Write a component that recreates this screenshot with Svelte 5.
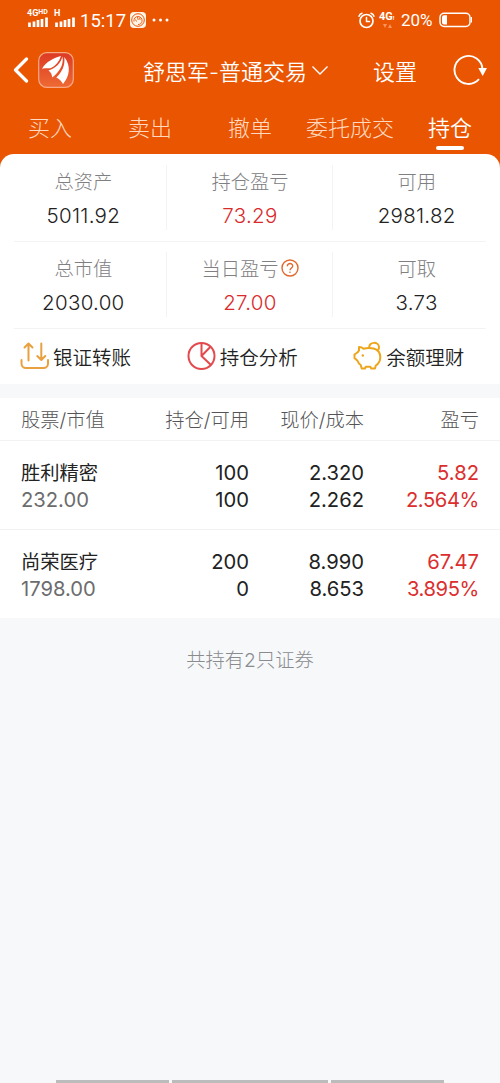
<script>
    let tabs = ["买入", "卖出", "撤单", "委托成交", "持仓"];
    let active = "持仓";

    let stats = [
        { label: "总资产", value: "5011.92" },
        { label: "持仓盈亏", value: "73.29", red: true },
        { label: "可用", value: "2981.82" },
        { label: "总市值", value: "2030.00" },
        { label: "当日盈亏", value: "27.00", red: true, help: true },
        { label: "可取", value: "3.73" },
    ];

    let stocks = [
        { name: "胜利精密", worth: "232.00", held: "100", usable: "100", price: "2.320", cost: "2.262", gain: "5.82", rate: "2.564%" },
        { name: "尚荣医疗", worth: "1798.00", held: "200", usable: "0", price: "8.990", cost: "8.653", gain: "67.47", rate: "3.895%" },
    ];
</script>

<div class="page">
    <header>
        <div class="status">
            <div class="sim">
                <span>4G<sup>HD</sup></span>
                <svg width="21" height="11" viewBox="0 0 21 11"><path d="M2.500 6.500V11M7 5.500V11M11 4v7M15 3v8M19.500 1.500v9.500" stroke="#fff" stroke-width="2.700" /></svg>
            </div>
            <div class="sim second">
                <span>H</span>
                <svg width="21" height="11" viewBox="0 0 21 11"><path d="M2.500 6.500V11M7 5.500V11M11 4v7M15 3v8M19.500 1.500v9.500" stroke="#fff" stroke-width="2.700" /></svg>
            </div>
            <span class="time">15:17</span>
            <svg class="app" width="16" height="16" viewBox="0 0 16 16">
                <rect width="16" height="16" rx="4" fill="#fff4e8" />
                <circle cx="8" cy="8" r="6.300" fill="none" stroke="#eb5500" stroke-width="1" />
                <path d="M4 9.500c-.5-3 1.500-5 4-5s4.500 2 4 5c-.4 2-2 3-4 3M5.500 7.500l1 2M7.500 5l.7 3M9.500 5.500l.6 2.500" fill="none" stroke="#eb5500" stroke-width=".9" />
            </svg>
            <svg class="dots" width="17" height="4" viewBox="0 0 17 4"><circle cx="2" cy="2" r="1.500" fill="#fff" /><circle cx="8.500" cy="2" r="1.500" fill="#fff" /><circle cx="15" cy="2" r="1.500" fill="#fff" /></svg>
            <svg class="alarm" width="17" height="17" viewBox="0 0 17 17" fill="none" stroke="#fff" stroke-linecap="round">
                <circle cx="8.500" cy="9" r="6.500" stroke-width="1.700" />
                <path d="M8.500 5.500v4h3" stroke-width="1.500" />
                <path d="M1 4.200Q1.700 2 4 1.300M16 4.200Q15.300 2 13 1.300" stroke-width="1.500" />
            </svg>
            <div class="net">
                <span>4G<i>!</i></span>
                <svg width="9" height="4" viewBox="0 0 9 4"><path d="M0 0h4L2 4zM5 4h4L7 0z" fill="#f7935c" /></svg>
            </div>
            <span class="percent">20%</span>
            <svg class="battery" width="34" height="16" viewBox="0 0 34 16">
                <rect x="1" y="1.300" width="30" height="13.200" rx="4.200" fill="none" stroke="#fff" stroke-width="1.500" />
                <path d="M5 3.300h3v9.200H5a2 2 0 0 1-2-2V5.300a2 2 0 0 1 2-2zM32 5h1v5.500h-1z" fill="#fff" />
            </svg>
        </div>

        <nav>
            <svg class="back" width="16" height="26" viewBox="0 0 16 26"><path d="M13.500 2L2.500 13l11 11" fill="none" stroke="#fff" stroke-width="3.200" stroke-linecap="round" stroke-linejoin="round" /></svg>
            <svg class="logo" width="36" height="36" viewBox="0 0 36 36">
                <defs>
                    <linearGradient id="logo-bg" x1="0" y1="0" x2="0" y2="1">
                        <stop offset="0" stop-color="#dc3a23" />
                        <stop offset="1" stop-color="#ee6a34" />
                    </linearGradient>
                </defs>
                <rect x=".7" y=".7" width="34.600" height="34.600" rx="8" fill="url(#logo-bg)" stroke="#f9a886" stroke-width="1.200" />
                <path d="M23 4C16 6 8 9.500 4 16.800c3.500-.8 6-.4 8.500-.5C17.500 14 21 10 23 4z" fill="#fff" />
                <path d="M24.500 4.500C22.500 11.500 18 16 10.500 18.500c2.500 1.700 3.500 4 3.700 7C21 20 26 13.500 24.500 4.500z" fill="#fff" />
                <path d="M26.300 5c1 8.500-2.300 15-8 20.500 3.200 1.500 5.200 3.500 6.700 6.500C31.500 24.500 33.500 14 26.300 5z" fill="#fff" />
            </svg>
            <div class="account">
                <span>舒思军-普通交易</span>
                <svg width="18" height="11" viewBox="0 0 18 11"><path d="M1.500 1.500l7.500 7.500 7.500-7.500" fill="none" stroke="#fff" stroke-width="1.400" /></svg>
            </div>
            <span class="setting">设置</span>
            <svg class="refresh" width="35" height="32" viewBox="0 0 35 32">
                <path d="M29.500 15.500A14 14 0 1 0 26 25.200" fill="none" stroke="#fff" stroke-width="1.900" />
                <path d="M25.300 14h8.700l-4.300 8z" fill="#fff" />
            </svg>
        </nav>

        <div class="tabs">
            {#each tabs as tab}
                <div class="tab" class:active={tab === active}>{tab}</div>
            {/each}
        </div>
    </header>

    <section class="assets">
        <div class="stats">
            {#each stats as stat}
                <div class="stat">
                    <div class="label">
                        {stat.label}
                        {#if stat.help}
                            <svg width="18" height="18" viewBox="0 0 18 18" fill="none" stroke="#e0692c">
                                <circle cx="9" cy="9" r="8" stroke-width="1.400" />
                                <path d="M6.300 7.200c0-3.600 5.500-3.400 5.400-.2 0 1.900-2.700 2-2.700 4.300" stroke-width="1.400" />
                                <circle cx="9" cy="13.200" r=".4" stroke-width=".9" />
                            </svg>
                        {/if}
                    </div>
                    <div class="value" class:red={stat.red}>{stat.value}</div>
                </div>
            {/each}
        </div>
        <div class="actions">
            <div class="action">
                <svg width="30" height="30" viewBox="0 0 30 30" fill="none" stroke="#e9a140" stroke-width="2" stroke-linecap="round" stroke-linejoin="round">
                    <path d="M1.500 19v3.500a4.500 4.500 0 0 0 4.500 4.500h17.500a4.500 4.500 0 0 0 4.500-4.500V19" />
                    <path d="M8.500 19.500V2.500M4.500 6.500l4-4 4 4M21.300 2.500V19M17.300 15l4 4 4-4" />
                </svg>
                <span>银证转账</span>
            </div>
            <div class="action">
                <svg width="30" height="30" viewBox="0 0 30 30" fill="none" stroke="#e24a4e" stroke-width="2" stroke-linejoin="round">
                    <circle cx="14.500" cy="15" r="13" />
                    <path d="M14.500 2v13l9.500 9M14.500 15L23.500 5.700" />
                </svg>
                <span>持仓分析</span>
            </div>
            <div class="action">
                <svg width="30" height="30" viewBox="0 0 30 30" fill="none" stroke="#eda51c" stroke-width="2" stroke-linejoin="round" stroke-linecap="round">
                    <path d="M6 6c2 0 3.300.5 4.500 1.800C13 7 17.500 6.800 20.500 7.500c4.500 1.200 6.800 4.500 6.800 8.700 0 3.600-1.500 6.300-4.500 8.300l-.8 3h-3.700l-1-1.800h-4.500l-.8 1.800H8.700l-1-3.500C6 22.800 5 21.300 4.500 19.800L1.500 17v-3.500l3.200-2.200c.4-.9.800-1.300 1.300-1.800z" />
                    <path d="M16.200 6.500c-.2-6 9.300-6.200 9.800-.4.100 1.300-.3 2.200-1 3" />
                    <circle cx="9.800" cy="14.400" r=".6" stroke-width="1.300" />
                </svg>
                <span>余额理财</span>
            </div>
        </div>
    </section>

    <section class="holdings">
        <div class="row head">
            <div>股票/市值</div>
            <div>持仓/可用</div>
            <div>现价/成本</div>
            <div>盈亏</div>
        </div>
        {#each stocks as stock}
            <div class="row">
                <div><b>{stock.name}</b><span class="worth">{stock.worth}</span></div>
                <div><span>{stock.held}</span><span>{stock.usable}</span></div>
                <div><span>{stock.price}</span><span>{stock.cost}</span></div>
                <div class="red"><span>{stock.gain}</span><span class="rate">{stock.rate}</span></div>
            </div>
        {/each}
    </section>

    <p class="total">共持有2只证券</p>

    <div class="gesture">
        <i></i><i></i><i></i>
    </div>
</div>

<style>
    :global(body) {
        margin: 0;
    }

    .page {
        width: 500px;
        height: 1083px;
        overflow: hidden;
        display: flex;
        flex-direction: column;
        background: #f7f8fa;
        font-family: Inter, "Noto Sans CJK SC", sans-serif;
        font-weight: 300;
        color: #222;
    }

    svg {
        display: block;
        flex: none;
    }

    header {
        height: 172px;
        flex: none;
        background: #ea5502;
        color: #fff;
    }

    .status {
        height: 40px;
        display: flex;
        align-items: center;
        padding: 0 27px;
        font-family: Roboto, sans-serif;
        font-weight: 400;
    }

    .sim {
        width: 21px;
        height: 17px;
        font-size: 9px;
        line-height: 6px;
        font-weight: 700;
        white-space: nowrap;
        margin-top: -3px;
    }

    .sim sup {
        font-size: 7px;
        line-height: 0;
        vertical-align: 2px;
    }

    .second {
        margin-left: 6px;
    }

    .time {
        margin-left: 5px;
        width: 45px;
        font-size: 18.5px;
        margin-top: 1px;
    }

    .app {
        margin-left: 5px;
    }

    .dots {
        margin-left: 6px;
    }

    .alarm {
        margin-left: auto;
    }

    .net {
        width: 17px;
        margin-left: 4px;
        font-size: 11px;
        line-height: 10px;
        font-weight: 700;
    }

    .net i {
        font-size: 6px;
        font-style: normal;
    }

    .net svg {
        margin: 1px 0 0 4px;
    }

    .percent {
        margin-left: 5px;
        width: 33px;
        font-size: 17px;
    }

    .battery {
        margin-left: 5px;
    }

    nav {
        height: 60px;
        display: flex;
        align-items: center;
        padding-left: 13px;
        font-size: 22px;
        font-weight: 350;
    }

    .logo {
        margin-left: 9px;
    }

    .account {
        margin-left: 69px;
        width: 230px;
        display: flex;
        align-items: center;
        gap: 4px;
        white-space: nowrap;
    }

    .account span,
    .setting {
        margin-top: -1px;
    }

    .setting {
        width: 80px;
    }

    .tabs {
        display: grid;
        grid-template-columns: repeat(5, 100px);
        height: 54px;
    }

    .tab {
        display: flex;
        flex-direction: column;
        align-items: center;
        font-size: 22px;
        line-height: 56px;
        height: 50px;
        white-space: nowrap;
        color: #ffd9c0;
    }

    .active {
        color: #fff;
        font-weight: 350;
    }

    .active::after {
        content: "";
        width: 28px;
        height: 4px;
        margin-top: -10px;
        border-radius: 2px;
        background: #fff;
    }

    .assets {
        height: 230px;
        flex: none;
        margin-top: -18px;
        background: #fff;
        border-radius: 14px 14px 0 0;
    }

    .stats {
        display: grid;
        grid-template-columns: repeat(3, 1fr);
        background: linear-gradient(#f3f3f4, #f3f3f4) 14px 87px / 472px 1px no-repeat;
    }

    .stat {
        height: 87px;
        text-align: center;
        background: linear-gradient(#f3f3f4, #f3f3f4) right 11px / 1px 65px no-repeat;
    }

    .stat:nth-child(3n) {
        background: none;
    }

    .label {
        display: flex;
        justify-content: center;
        align-items: center;
        gap: 2px;
        height: 28px;
        padding-top: 13px;
        font-size: 19.3px;
        color: #808082;
    }

    .value {
        padding-top: 2px;
        line-height: 38px;
        font-size: 20.5px;
        font-weight: 350;
        letter-spacing: 0.3px;
    }

    .value.red {
        color: #d92a2c;
    }

    .actions {
        display: grid;
        grid-template-columns: repeat(3, 1fr);
        height: 56px;
        background: linear-gradient(#f3f3f4, #f3f3f4) 14px 0 / 472px 1px no-repeat;
    }

    .action {
        display: flex;
        align-items: center;
        gap: 3px;
        padding: 0 0 0 20px;
        font-size: 19.5px;
        font-weight: 350;
        white-space: nowrap;
    }

    .holdings {
        margin-top: 14px;
        background: #fff;
    }

    .row {
        display: grid;
        grid-template-columns: 113px 115px 115px 115px;
        box-sizing: border-box;
        height: 89px;
        padding: 18px 21px 0;
        border-top: 1px solid #f2f2f3;
        font-size: 20.2px;
        line-height: 27px;
        font-weight: 400;
        text-align: right;
    }

    .row > div:first-child {
        text-align: left;
    }

    .row b,
    .row span {
        display: block;
        height: 27px;
    }

    .row b {
        line-height: 29px;
        font-size: 19.3px;
        font-weight: 400;
    }

    .row .worth {
        color: #6c6c6e;
    }

    .rate {
        letter-spacing: -0.4px;
    }

    .head {
        height: 42px;
        padding-top: 9px;
        border: none;
        font-size: 19.3px;
        font-weight: 300;
        color: #555557;
    }

    .red {
        color: #db2f2f;
    }

    .total {
        margin: 28px 0 0;
        text-align: center;
        font-size: 19.3px;
        line-height: 29px;
        color: #898b8f;
    }

    .gesture {
        display: flex;
        gap: 3px;
        margin: auto 56px 0;
    }

    .gesture i {
        height: 3px;
        flex: 113;
        background: #bcbcbc;
    }

    .gesture i:nth-child(2) {
        flex: 156;
    }
</style>
